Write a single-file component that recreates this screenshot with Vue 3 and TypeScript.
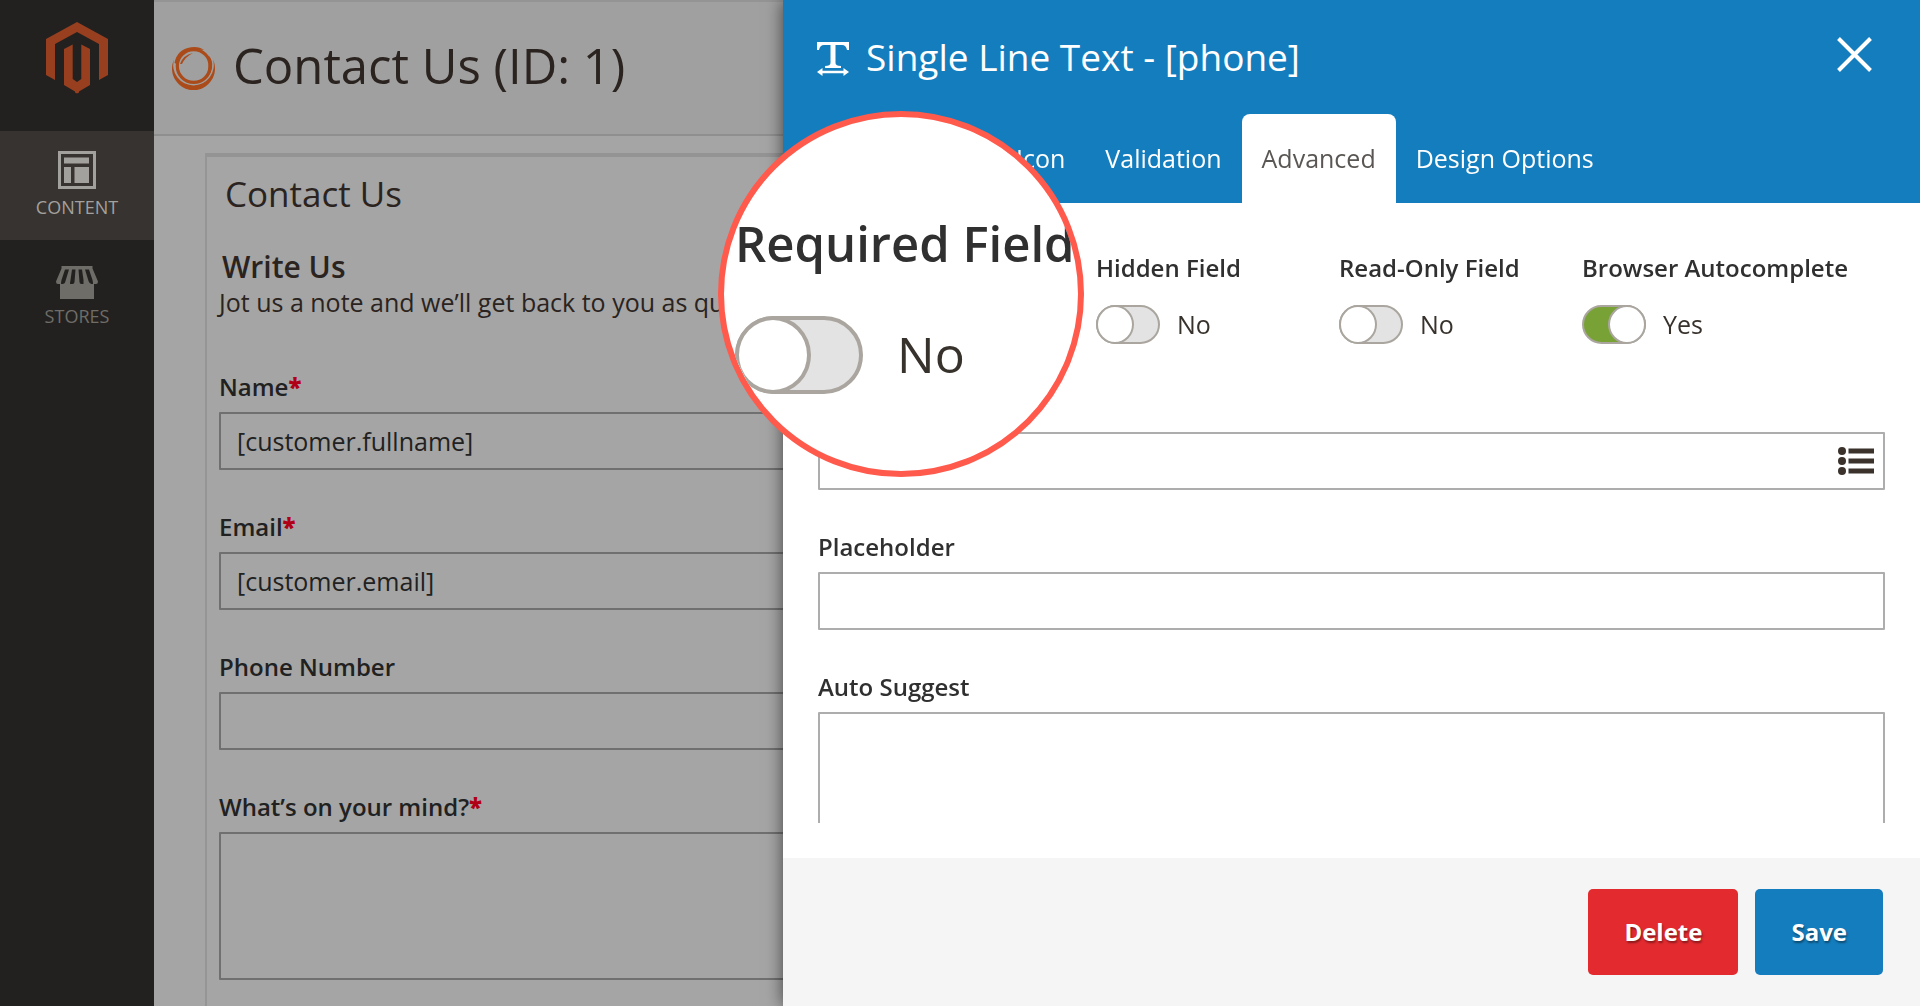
<script setup lang="ts">
import { ref } from 'vue'

interface FormField {
  id: string
  label: string
  required: boolean
  value: string
  multiline?: boolean
}

interface Toggle {
  id: string
  label: string
  on: boolean
}

const formFields = ref<FormField[]>([
  { id: 'name', label: 'Name', required: true, value: '[customer.fullname]' },
  { id: 'email', label: 'Email', required: true, value: '[customer.email]' },
  { id: 'phone', label: 'Phone Number', required: false, value: '' },
  { id: 'message', label: 'What’s on your mind?', required: true, value: '', multiline: true },
])

const tabs = ['Icon', 'Validation', 'Advanced', 'Design Options']
const activeTab = ref('Advanced')

const toggles = ref<Toggle[]>([
  { id: 'hidden', label: 'Hidden Field', on: false },
  { id: 'readonly', label: 'Read-Only Field', on: false },
  { id: 'autocomplete', label: 'Browser Autocomplete', on: true },
])

const requiredField = ref(false)
const defaultValue = ref('')
const placeholder = ref('')
const autoSuggest = ref('')
</script>

<template>
  <div class="page">
    <nav class="sidebar">
      <a class="brand" href="#" aria-label="Dashboard">
        <svg width="62" height="72" viewBox="46 22 62 72">
          <path fill="#983f1f" d="M77 22 108 39V75L99 80V44L77 32 55 44V80L46 75V39Z" />
          <path fill="#983f1f" d="M64 49 72.700 44.500V79L77 82 81.300 79V44.500L90 49V85L79 91.500V92.500L77 93.500 75 92.500V91.500L64 85Z" />
        </svg>
      </a>
      <a class="nav-item active" href="#">
        <svg width="42" height="40" viewBox="0 0 42 40">
          <rect x="3.500" y="1.500" width="35" height="35" fill="none" stroke="#a3a19d" stroke-width="3" />
          <path fill="#a3a19d" d="M8 6.500H33V12.500H8ZM8 16H15V32H8ZM18.500 16H33V32H18.500Z" />
        </svg>
        <span>CONTENT</span>
      </a>
      <a class="nav-item" href="#">
        <svg width="42" height="40" viewBox="0 0 42 40">
          <path fill="#6f6d68" d="M5.500 6H36.500V8.500L42 21.500Q42 24 40 24H38V39H4V24H2Q0 24 0 21.500L5.500 8.500Z" />
          <path
            fill="#23211f"
            d="M9 9.500H13L9.500 21Q9 24 6.500 24H5Q5 22 5.500 20ZM16 9.500H19.500L18.500 22Q18.500 24 16.500 24H14Q14 22 14.500 20ZM22.500 9.500H26L27.500 20V24H25.500Q23.500 24 23.500 22ZM29 9.500H33L36.500 20Q37 22 37 24H35.500Q33.500 24 32.500 21Z"
          />
        </svg>
        <span>STORES</span>
      </a>
    </nav>

    <main class="main">
      <header class="page-header">
        <svg width="43" height="49" viewBox="0 -6 43 49">
          <path fill="#ab4b1a" d="M2 12.500A21.500 21.500 0 1 0 41 12.500A20.300 20.300 0 1 1 2 12.500Z" />
          <circle cx="21.700" cy="19" r="16.400" fill="none" stroke="#ab4b1a" stroke-width="3.200" />
          <path fill="#ab4b1a" d="M2.500 16Q5 2.500 19 .3Q27-.8 32 3Q22 1 14.500 4Q7 7.500 4.500 17Z" />
          <path fill="#ab4b1a" d="M8 17Q11 8 21 6Q13 10 10 17Z" />
          <path fill="#ab4b1a" d="M37 9Q41 13 40 21Q38 31 29 35.500Q36 29 36.500 20Z" />
        </svg>
        <h1>Contact Us (ID: 1)</h1>
      </header>

      <section class="form-card">
        <h2>Contact Us</h2>
        <h3>Write Us</h3>
        <p class="intro">Jot us a note and we’ll get back to you as quickly as possible.</p>
        <div v-for="field in formFields" :key="field.id" class="field">
          <label :for="field.id">{{ field.label }}<b v-if="field.required">*</b></label>
          <textarea v-if="field.multiline" :id="field.id" v-model="field.value"></textarea>
          <input v-else :id="field.id" v-model="field.value" type="text" />
        </div>
      </section>
    </main>

    <aside class="drawer">
      <header class="drawer-header">
        <div class="title-row">
          <svg width="32" height="38" viewBox="0 -4 32 38">
            <path
              fill="#fff"
              d="M0 0H32V8H30Q29 3 25 3H18.500V21Q18.500 24 24 24V26H8V24Q13.500 24 13.500 21V3H7Q3 3 2 8H0Z"
            />
            <path fill="#fff" d="M0 30 5.500 26V28.800H26.500V26L32 30 26.500 34V31.200H5.500V34Z" />
          </svg>
          <h2>Single Line Text - [phone]</h2>
          <button class="close" type="button" aria-label="Close">
            <svg width="35" height="36" viewBox="0 0 35 36">
              <path d="M1.500 1.500 33.500 33.500M33.500 1.500 1.500 33.500" stroke="#fff" stroke-width="4" />
            </svg>
          </button>
        </div>
        <div class="tabs" role="tablist">
          <button
            v-for="tab in tabs"
            :key="tab"
            type="button"
            role="tab"
            :aria-selected="tab === activeTab"
            :class="{ selected: tab === activeTab }"
            @click="activeTab = tab"
          >
            {{ tab }}
          </button>
        </div>
      </header>

      <div class="drawer-body">
        <div class="toggles">
          <div v-for="toggle in toggles" :key="toggle.id" class="toggle">
            <label :for="toggle.id">{{ toggle.label }}</label>
            <div class="switch-row">
              <input :id="toggle.id" v-model="toggle.on" class="switch" type="checkbox" />
              <span>{{ toggle.on ? 'Yes' : 'No' }}</span>
            </div>
          </div>
        </div>
        <div class="picker">
          <input v-model="defaultValue" type="text" aria-label="Default Value" />
          <button type="button" aria-label="Insert variable">
            <svg width="36" height="28" viewBox="0 0 36 28">
              <g fill="#3b322c">
                <circle cx="4" cy="4" r="4" />
                <circle cx="4" cy="14" r="4" />
                <circle cx="4" cy="24" r="4" />
                <path d="M10.500 1.500H36V6.500H10.500ZM10.500 11.500H36V16.500H10.500ZM10.500 21.500H36V26.500H10.500Z" />
              </g>
            </svg>
          </button>
        </div>
        <div class="field">
          <label for="placeholder">Placeholder</label>
          <input id="placeholder" v-model="placeholder" type="text" />
        </div>
        <div class="field">
          <label for="suggest">Auto Suggest</label>
          <textarea id="suggest" v-model="autoSuggest"></textarea>
        </div>
      </div>

      <footer class="drawer-footer">
        <button class="delete" type="button">Delete</button>
        <button class="save" type="button">Save</button>
      </footer>

      <div class="magnifier">
        <label for="required">Required Field</label>
        <div class="switch-row">
          <input id="required" v-model="requiredField" class="switch" type="checkbox" />
          <span>{{ requiredField ? 'Yes' : 'No' }}</span>
        </div>
      </div>
    </aside>
  </div>
</template>

<style>
body {
  margin: 0;
}
</style>

<style scoped>
.page,
.page * {
  box-sizing: border-box;
}

.page {
  display: flex;
  height: 100vh;
  overflow: hidden;
  background: #a5a5a5;
  color: #2a2320;
  font: 25px/34px "Open Sans", "Noto Sans", sans-serif;
}

h1,
h2,
h3,
p {
  margin: 0;
  font-weight: 400;
}

button {
  border: 0;
  padding: 0;
  background: none;
  color: inherit;
  font: inherit;
}

/* Sidebar */
.sidebar {
  flex: 0 0 154px;
  background: #23211f;
}

.brand {
  display: block;
  height: 131px;
  padding-top: 22px;
  text-align: center;
}

.brand svg,
.nav-item svg {
  display: block;
  margin: 0 auto;
}

.nav-item {
  display: block;
  height: 109px;
  padding-top: 20px;
  color: #6f6d68;
  font-size: 18px;
  line-height: 24px;
  text-align: center;
  text-decoration: none;
}

.nav-item span {
  display: block;
  margin-top: 4px;
}

.nav-item.active {
  background: #373330;
  color: #a3a19d;
}

/* Form page */
.main {
  flex: 1;
  min-width: 0;
}

.page-header {
  display: flex;
  align-items: center;
  gap: 18px;
  height: 136px;
  padding: 0 18px 6px;
  border-top: 2px solid #949494;
  border-bottom: 2px solid #8f8f8f;
  background: #a0a0a0;
}

.page-header h1 {
  font-size: 49px;
  line-height: 66px;
}

.form-card {
  min-height: 100%;
  margin: 17px 0 0 51px;
  padding: 13px 12px;
  border-top: 4px solid #949494;
  border-left: 2px solid #959595;
}

.form-card h2 {
  margin: 0 0 31px 6px;
  font-size: 35px;
  line-height: 48px;
}

.form-card h3 {
  margin-left: 3px;
  font-size: 30px;
  font-weight: 600;
  line-height: 36px;
}

.intro {
  margin-bottom: 51px;
  white-space: nowrap;
}

.field {
  margin-bottom: 40px;
}

.field label,
.toggle label {
  display: block;
  color: #303030;
  font-size: 24px;
  font-weight: 600;
}

.field label {
  margin-bottom: 8px;
}

.form-card .field label {
  color: #212121;
}

.field b {
  color: #b00016;
}

input[type="text"],
textarea {
  display: block;
  width: 100%;
  height: 58px;
  margin: 0;
  padding: 0 16px;
  border: 2px solid #adadad;
  border-radius: 1px;
  outline: 0;
  background: none;
  color: #212121;
  font: inherit;
  resize: none;
}

textarea {
  height: 148px;
}

.form-card input,
.form-card textarea {
  border-color: #707070;
}

/* Drawer */
.drawer {
  position: fixed;
  top: 0;
  right: 0;
  bottom: 0;
  left: 783px;
  display: flex;
  flex-direction: column;
  background: #fff;
  box-shadow: 0 0 16px rgba(0, 0, 0, 0.6);
}

.drawer-header {
  padding-top: 32px;
  background: #147dbd;
  color: #fff;
}

.title-row {
  display: flex;
  align-items: center;
  padding: 0 48px 0 34px;
}

.title-row h2 {
  flex: 1;
  margin-left: 17px;
  font-size: 37px;
  line-height: 50px;
}

.close {
  align-self: flex-start;
  padding-top: 5px;
}

.close svg {
  display: block;
}

.tabs {
  display: flex;
  margin-top: 32px;
  padding-left: 213px;
}

.tabs button {
  height: 89px;
  padding: 0 20px 2px;
  border-radius: 8px 8px 0 0;
}

.tabs .selected {
  background: #fff;
  color: #595653;
}

.drawer-body {
  flex: 1;
  min-height: 0;
  margin-bottom: 35px;
  padding: 48px 35px 0;
  overflow: hidden;
}

.toggles {
  display: grid;
  grid-template-columns: 243px 243px auto;
  margin-left: 278px;
}

.toggle label {
  margin-bottom: 20px;
  white-space: nowrap;
}

.switch-row {
  display: flex;
  align-items: center;
  gap: 17px;
  color: #38322d;
}

.switch-row span {
  padding-bottom: 2px;
}

.switch {
  position: relative;
  width: 64px;
  height: 39px;
  margin: 0;
  border: 2px solid #aaa69f;
  border-radius: 20px;
  background: #e3e3e3;
  appearance: none;
}

.switch::before {
  position: absolute;
  top: -2px;
  left: -2px;
  width: 38px;
  height: 39px;
  box-sizing: border-box;
  border: 2px solid #aaa69f;
  border-radius: 50%;
  background: #fff;
  content: "";
}

.switch:checked {
  background: #79a236;
}

.switch:checked::before {
  left: 24px;
}

.picker {
  position: relative;
  margin: 88px 0 40px;
}

.picker button {
  position: absolute;
  top: 15px;
  right: 11px;
}

.picker svg {
  display: block;
}

.drawer-footer {
  display: flex;
  justify-content: flex-end;
  gap: 17px;
  height: 148px;
  padding: 31px 37px;
  background: #f5f5f5;
}

.drawer-footer button {
  height: 86px;
  padding: 0 36px;
  border-radius: 5px;
  color: #fff;
  font-size: 24px;
  font-weight: 700;
  text-shadow: 1px 2px 2px rgba(0, 0, 0, 0.4);
}

.drawer-footer .delete {
  background: #e22a2f;
}

.drawer-footer .save {
  background: #147dbd;
}

/* Magnified view of the required switch */
.magnifier {
  position: absolute;
  top: 111px;
  left: -65px;
  width: 366px;
  height: 366px;
  padding: 92px 0 0 11px;
  border: 6px solid #ff5a4c;
  border-radius: 50%;
  overflow: hidden;
  background: #fff;
  font-size: 50px;
  line-height: 68px;
  white-space: nowrap;
}

.magnifier label {
  display: block;
  margin-bottom: 39px;
  color: #303030;
  font-size: 49px;
  font-weight: 600;
}

.magnifier .switch-row {
  gap: 34px;
}

.magnifier .switch {
  flex: none;
  width: 128px;
  height: 78px;
  border-width: 4px;
  border-radius: 39px;
}

.magnifier .switch::before {
  top: -4px;
  left: -4px;
  width: 76px;
  height: 78px;
  border-width: 4px;
}

.magnifier .switch:checked::before {
  left: 48px;
}
</style>
